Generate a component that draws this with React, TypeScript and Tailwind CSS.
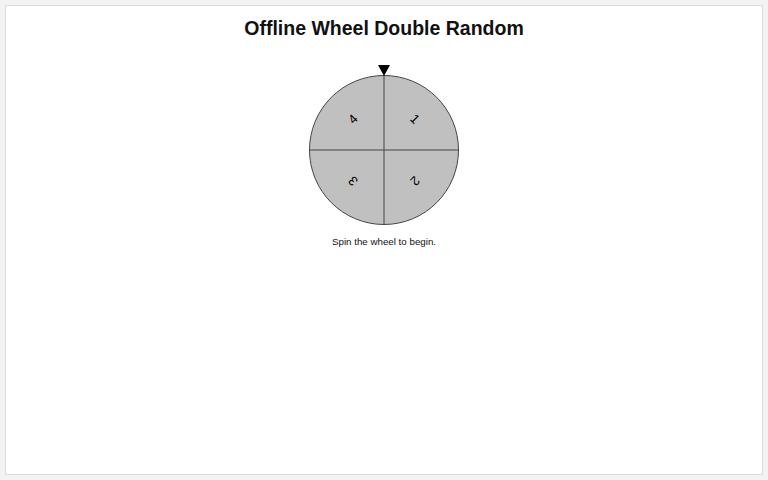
const segments = [
  { label: "1", x: 415, y: 119, rot: 45 },
  { label: "2", x: 415, y: 181, rot: 135 },
  { label: "3", x: 353, y: 181, rot: -135 },
  { label: "4", x: 353, y: 119, rot: -45 },
];

function Wheel() {
  // wheel centre at (384,150) in page coords; svg starts at x=304, y=64
  const ox = 304;
  const oy = 64;
  return (
    <svg width={160} height={164} viewBox="0 0 160 164" className="block">
      <circle cx={80} cy={86} r={74.5} fill="#c0c0c0" stroke="#444" strokeWidth={1} />
      <line x1={80} y1={11.5} x2={80} y2={160.5} stroke="#444" strokeWidth={1} />
      <line x1={5.5} y1={86} x2={154.5} y2={86} stroke="#444" strokeWidth={1} />
      {segments.map((s) => (
        <text
          key={s.label}
          x={s.x - ox}
          y={s.y - oy}
          transform={`rotate(${s.rot} ${s.x - ox} ${s.y - oy})`}
          textAnchor="middle"
          dominantBaseline="central"
          fontSize={13}
          fontFamily="'Liberation Sans', Arial, sans-serif"
          fill="#000"
        >
          {s.label}
        </text>
      ))}
      {/* pointer */}
      <polygon points="74,1 86,1 80,12" fill="#000" />
    </svg>
  );
}

export default function App() {
  return (
    <div className="w-[768px] h-[480px] bg-[#f3f3f3] p-[5px] font-['Liberation_Sans',Arial,sans-serif]">
      <div className="h-[470px] bg-white border border-[#dcdcdc] flex flex-col items-center">
        <h1 className="pt-[10px] text-[19.5px] leading-[24px] font-bold text-[#111]">
          Offline Wheel Double Random
        </h1>
        <div className="mt-[24px]">
          <Wheel />
        </div>
        <p className="mt-[8px] text-[9.75px] leading-[12px] text-[#111]">Spin the wheel to begin.</p>
      </div>
    </div>
  );
}
